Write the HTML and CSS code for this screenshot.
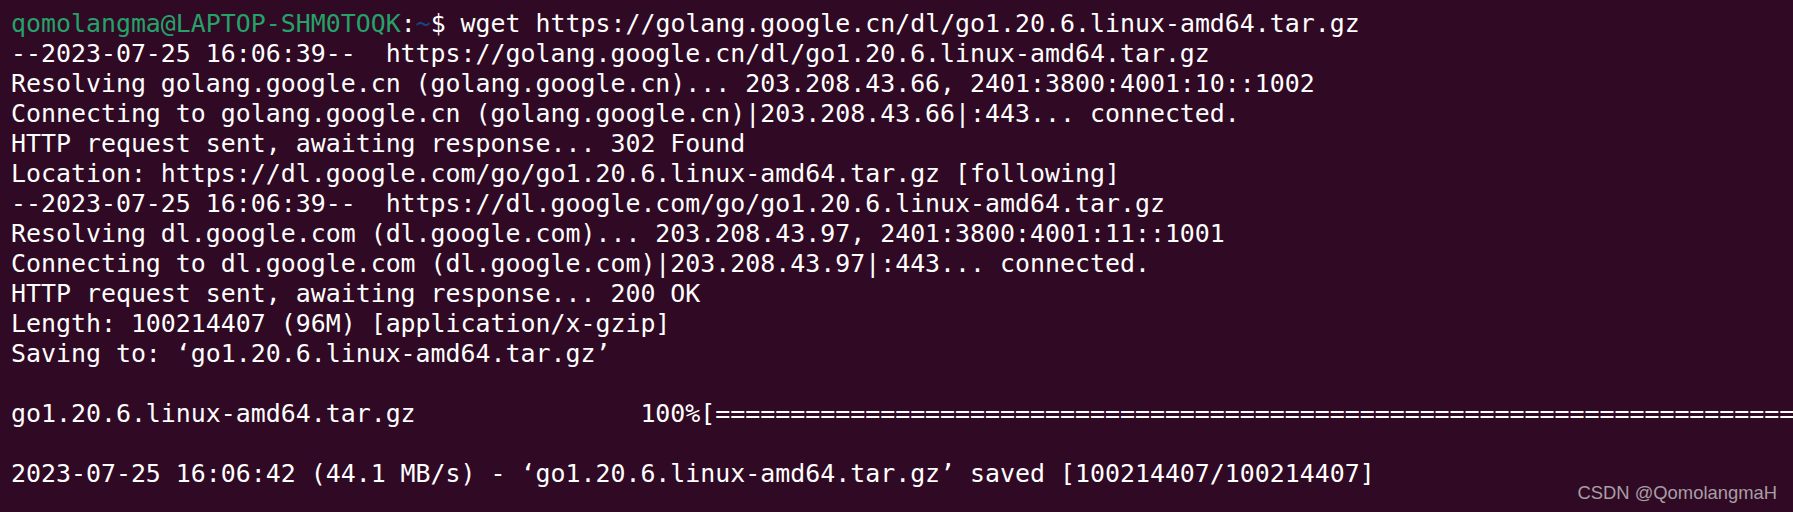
FILE: index.html
```html
<!DOCTYPE html>
<html lang="en">
<head>
<meta charset="utf-8">
<title>Terminal</title>
<link rel="stylesheet" href="styles.css">
</head>
<body>
<main class="term">
<pre class="out"><span class="user">qomolangma@LAPTOP-SHM0TOQK</span>:<span class="path">~</span>$ wget https://golang.google.cn/dl/go1.20.6.linux-amd64.tar.gz
--2023-07-25 16:06:39--  https://golang.google.cn/dl/go1.20.6.linux-amd64.tar.gz
Resolving golang.google.cn (golang.google.cn)... 203.208.43.66, 2401:3800:4001:10::1002
Connecting to golang.google.cn (golang.google.cn)|203.208.43.66|:443... connected.
HTTP request sent, awaiting response... 302 Found
Location: https://dl.google.com/go/go1.20.6.linux-amd64.tar.gz [following]
--2023-07-25 16:06:39--  https://dl.google.com/go/go1.20.6.linux-amd64.tar.gz
Resolving dl.google.com (dl.google.com)... 203.208.43.97, 2401:3800:4001:11::1001
Connecting to dl.google.com (dl.google.com)|203.208.43.97|:443... connected.
HTTP request sent, awaiting response... 200 OK
Length: 100214407 (96M) [application/x-gzip]
Saving to: ‘go1.20.6.linux-amd64.tar.gz’

go1.20.6.linux-amd64.tar.gz               100%[==================================================================================================>]  95.57M  44.1MB/s    in 2.2s

2023-07-25 16:06:42 (44.1 MB/s) - ‘go1.20.6.linux-amd64.tar.gz’ saved [100214407/100214407]
</pre>
<div class="mark">CSDN @QomolangmaH</div>
</main>
</body>
</html>
```

FILE: styles.css
```css
html, body {
  margin: 0;
  padding: 0;
  background: #300a24;
  width: 1793px;
  height: 512px;
  overflow: hidden;
}

.term {
  position: relative;
  width: 1793px;
  height: 512px;
  overflow: hidden;
  background: #300a24;
}

.out {
  margin: 0;
  padding: 9px 0 0 11px;
  font-family: "DejaVu Sans Mono", "Liberation Mono", monospace;
  font-size: 24.9px;
  line-height: 30px;
  color: #ffffff;
  white-space: pre;
}

.user {
  color: #26a269;
}

.path {
  color: #12488b;
}

.mark {
  position: absolute;
  right: 16px;
  bottom: 8px;
  font-family: "Liberation Sans", Arial, sans-serif;
  font-size: 18.4px;
  color: #a89ea6;
}
```
